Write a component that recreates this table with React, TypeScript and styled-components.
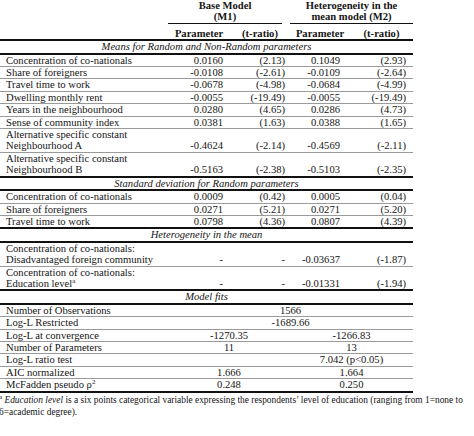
import { Fragment, ReactNode } from "react";
import styled, { createGlobalStyle } from "styled-components";

const GlobalStyle = createGlobalStyle`
  body {
    margin: 0;
    background: #fff;
  }
`;

type Line = "none" | "gray" | "thick";

const lineStyle = (l?: Line) =>
  l === "thick" ? "2px solid #111" : l === "gray" ? "1px solid #9a9a9a" : "none";

const Page = styled.div`
  width: 474px;
  font-family: "Liberation Serif", "Times New Roman", serif;
  font-size: 10.6px;
  color: #151515;
  overflow: hidden;
`;

const Table = styled.table`
  width: 413px;
  border-collapse: collapse;
  table-layout: fixed;
`;

const Head = styled.th<{ $line?: Line; $top?: number }>`
  padding: ${(p) => p.$top || 0}px 0 0;
  line-height: 11.4px;
  font-weight: 700;
  text-align: center;
  vertical-align: bottom;
  border-bottom: ${(p) => lineStyle(p.$line)};
`;

const GroupTitle = styled.div<{ $gapRight?: number }>`
  margin-right: ${(p) => p.$gapRight || 0}px;
  border-bottom: 1.5px solid #111;
`;

const Section = styled.td`
  padding: 0;
  line-height: 11.4px;
  font-style: italic;
  text-align: center;
  border-bottom: 2px solid #111;
`;

const Label = styled.td<{ $line?: Line }>`
  padding: 0 0 0 6px;
  line-height: 11.4px;
  text-align: left;
  white-space: nowrap;
  vertical-align: bottom;
  border-bottom: ${(p) => lineStyle(p.$line)};
`;

const Num = styled.td<{ $line?: Line; $pr?: number; $center?: boolean }>`
  padding: 0 ${(p) => p.$pr || 0}px 0 0;
  line-height: 11.4px;
  text-align: ${(p) => (p.$center ? "center" : "right")};
  white-space: nowrap;
  vertical-align: bottom;
  border-bottom: ${(p) => lineStyle(p.$line)};
`;

const Footnote = styled.div`
  font-size: 9.4px;
  line-height: 12px;
  white-space: nowrap;
  margin-top: 1px;
  margin-left: -1px;
`;

const Sup = styled.sup`
  font-size: 7px;
  line-height: 0;
  vertical-align: 4px;
`;

type DataRow = { label: ReactNode; v: string[]; line: Line };

const means: DataRow[] = [
  { label: "Concentration of co-nationals", v: ["0.0160", "(2.13)", "0.1049", "(2.93)"], line: "gray" },
  { label: "Share of foreigners", v: ["-0.0108", "(-2.61)", "-0.0109", "(-2.64)"], line: "gray" },
  { label: "Travel time to work", v: ["-0.0678", "(-4.98)", "-0.0684", "(-4.99)"], line: "gray" },
  { label: "Dwelling monthly rent", v: ["-0.0055", "(-19.49)", "-0.0055", "(-19.49)"], line: "gray" },
  { label: "Years in the neighbourhood", v: ["0.0280", "(4.65)", "0.0286", "(4.73)"], line: "gray" },
  { label: "Sense of community index", v: ["0.0381", "(1.63)", "0.0388", "(1.65)"], line: "gray" },
  {
    label: <>Alternative specific constant<br />Neighbourhood A</>,
    v: ["-0.4624", "(-2.14)", "-0.4569", "(-2.11)"],
    line: "gray",
  },
  {
    label: <>Alternative specific constant<br />Neighbourhood B</>,
    v: ["-0.5163", "(-2.38)", "-0.5103", "(-2.35)"],
    line: "thick",
  },
];

const stdDev: DataRow[] = [
  { label: "Concentration of co-nationals", v: ["0.0009", "(0.42)", "0.0005", "(0.04)"], line: "gray" },
  { label: "Share of foreigners", v: ["0.0271", "(5.21)", "0.0271", "(5.20)"], line: "gray" },
  { label: "Travel time to work", v: ["0.0798", "(4.36)", "0.0807", "(4.39)"], line: "thick" },
];

const hetero: DataRow[] = [
  {
    label: <>Concentration of co-nationals:<br />Disadvantaged foreign community</>,
    v: ["-", "-", "-0.03637", "(-1.87)"],
    line: "gray",
  },
  {
    label: <>Concentration of co-nationals:<br />Education level<Sup>a</Sup></>,
    v: ["-", "-", "-0.01331", "(-1.94)"],
    line: "thick",
  },
];

// right padding for the four value columns
const pads = [7, 5, 10, 7];

const fits: { label: ReactNode; all?: string; m1?: string; m2?: string }[] = [
  { label: "Number of Observations", all: "1566" },
  { label: "Log-L Restricted", all: "-1689.66" },
  { label: "Log-L at convergence", m1: "-1270.35", m2: "-1266.83" },
  { label: "Number of Parameters", m1: "11", m2: "13" },
  { label: "Log-L ratio test", m1: "", m2: "7.042 (p<0.05)" },
  { label: "AIC normalized", m1: "1.666", m2: "1.664" },
  { label: <>McFadden pseudo ρ<Sup>2</Sup></>, m1: "0.248", m2: "0.250" },
];

function Rows({ rows }: { rows: DataRow[] }) {
  return (
    <>
      {rows.map((r, i) => (
        <tr key={i}>
          <Label $line={r.line}>{r.label}</Label>
          {r.v.map((val, j) => (
            <Num key={j} $line={r.line} $pr={pads[j]}>
              {val}
            </Num>
          ))}
        </tr>
      ))}
    </>
  );
}

function App() {
  return (
    <Page>
      <GlobalStyle />
      <Table>
        <colgroup>
          <col style={{ width: 168 }} />
          <col style={{ width: 62 }} />
          <col style={{ width: 60 }} />
          <col style={{ width: 60 }} />
          <col style={{ width: 63 }} />
        </colgroup>
        <thead>
          <tr>
            <Head />
            <Head colSpan={2}>
              <GroupTitle $gapRight={8}>
                Base Model
                <br />
                (M1)
              </GroupTitle>
            </Head>
            <Head colSpan={2}>
              <GroupTitle>
                Heterogeneity in the
                <br />
                mean model (M2)
              </GroupTitle>
            </Head>
          </tr>
          <tr>
            <Head $line="thick" $top={4} />
            <Head $line="thick" $top={4}>Parameter</Head>
            <Head $line="thick" $top={4}>(t-ratio)</Head>
            <Head $line="thick" $top={4}>Parameter</Head>
            <Head $line="thick" $top={4}>(t-ratio)</Head>
          </tr>
        </thead>
        <tbody>
          <tr>
            <Section colSpan={5}>Means for Random and Non-Random parameters</Section>
          </tr>
          <Rows rows={means} />
          <tr>
            <Section colSpan={5}>Standard deviation for Random parameters</Section>
          </tr>
          <Rows rows={stdDev} />
          <tr>
            <Section colSpan={5}>Heterogeneity in the mean</Section>
          </tr>
          <Rows rows={hetero} />
          <tr>
            <Section colSpan={5}>Model fits</Section>
          </tr>
          {fits.map((f, i) => {
            const line: Line = i === fits.length - 1 ? "thick" : "gray";
            return (
              <tr key={i}>
                <Label $line={line}>{f.label}</Label>
                {f.all !== undefined ? (
                  <Num colSpan={4} $line={line} $center>
                    {f.all}
                  </Num>
                ) : (
                  <Fragment>
                    <Num colSpan={2} $line={line} $center>
                      {f.m1}
                    </Num>
                    <Num colSpan={2} $line={line} $center>
                      {f.m2}
                    </Num>
                  </Fragment>
                )}
              </tr>
            );
          })}
        </tbody>
      </Table>
      <Footnote>
        <Sup>a</Sup> <i>Education level</i> is a six points categorical variable expressing the
        respondents’ level of education (ranging from 1=none to
        <br />
        6=academic degree).
      </Footnote>
    </Page>
  );
}

export default App;
